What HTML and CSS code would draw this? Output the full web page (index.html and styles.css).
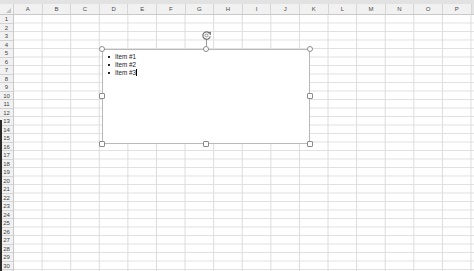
FILE: index.html
```html
<!DOCTYPE html>
<html>
<head>
<meta charset="utf-8">
<link rel="stylesheet" href="styles.css">
</head>
<body>
<div class="app">
  <div class="topbar"></div>
  <div class="colhead">
    <div class="corner"><span class="tri"></span></div>
    <div class="ch">A</div><div class="ch">B</div><div class="ch">C</div><div class="ch">D</div>
    <div class="ch">E</div><div class="ch">F</div><div class="ch">G</div><div class="ch">H</div>
    <div class="ch">I</div><div class="ch">J</div><div class="ch">K</div><div class="ch">L</div>
    <div class="ch">M</div><div class="ch">N</div><div class="ch">O</div><div class="ch">P</div>
    <div class="chrest"></div>
  </div>
  <div class="main">
    <div class="rowhead">
      <div class="rh">1</div><div class="rh">2</div><div class="rh">3</div><div class="rh">4</div><div class="rh">5</div>
      <div class="rh">6</div><div class="rh">7</div><div class="rh">8</div><div class="rh">9</div><div class="rh">10</div>
      <div class="rh">11</div><div class="rh">12</div><div class="rh">13</div><div class="rh">14</div><div class="rh">15</div>
      <div class="rh">16</div><div class="rh">17</div><div class="rh">18</div><div class="rh">19</div><div class="rh">20</div>
      <div class="rh">21</div><div class="rh">22</div><div class="rh">23</div><div class="rh">24</div><div class="rh">25</div>
      <div class="rh">26</div><div class="rh">27</div><div class="rh">28</div><div class="rh">29</div><div class="rh">30</div>
    </div>
    <div class="cells"></div>
  </div>

  <div class="edge"></div>

  <div class="textbox">
    <ul class="items">
      <li>Item #1</li>
      <li>Item #2</li>
      <li>Item #3<span class="caret"></span></li>
    </ul>
    <span class="h h-tl"></span><span class="h h-tm"></span><span class="h h-tr"></span>
    <span class="h h-ml"></span><span class="h h-mr"></span>
    <span class="h h-bl"></span><span class="h h-bm"></span><span class="h h-br"></span>
    <span class="stem"></span>
    <svg class="rot" width="11" height="11" viewBox="0 0 10 10">
      <path d="M7.8 3.0 A3.4 3.4 0 1 0 8.4 5.8" fill="none" stroke="#6f6f6f" stroke-width="1.1"/>
      <path d="M6.2 2.5 L8.5 2.2 L8.4 4.6" fill="none" stroke="#6f6f6f" stroke-width="1"/>
      <circle cx="5" cy="5" r="1.4" fill="none" stroke="#8a8a8a" stroke-width="0.8"/>
    </svg>
  </div>
</div>
</body>
</html>
```
FILE: styles.css
```css
* { box-sizing: border-box; }
html, body { margin: 0; padding: 0; }
body {
  width: 474px;
  height: 271px;
  overflow: hidden;
  background: #ffffff;
  font-family: "Liberation Sans", Arial, sans-serif;
  -webkit-font-smoothing: antialiased;
}
.app {
  position: relative;
  display: flex;
  flex-direction: column;
  width: 474px;
  height: 271px;
}
.topbar {
  height: 4px;
  background: #e2e2e2;
  flex: none;
}
.colhead {
  display: flex;
  height: 11px;
  flex: none;
  background: #f1f1f1;
  border-bottom: 1px solid #c9c9c9;
}
.corner {
  width: 14px;
  flex: none;
  border-right: 1px solid #cfcfcf;
  position: relative;
}
.tri {
  position: absolute;
  right: 2px;
  bottom: 1px;
  width: 0;
  height: 0;
  border-left: 5px solid transparent;
  border-bottom: 5px solid #c4c4c4;
}
.ch {
  width: 28.6px;
  flex: none;
  border-right: 1px solid #d6d6d6;
  font-size: 6px;
  line-height: 10px;
  color: #4a4a4a;
  text-align: center;
}
.chrest { flex: 1; background: #e4e4e4; }
.main {
  display: flex;
  flex: 1;
}
.rowhead {
  width: 14px;
  flex: none;
  background: #f1f1f1;
  border-right: 1px solid #c9c9c9;
  display: flex;
  flex-direction: column;
}
.rh {
  height: 8.5px;
  flex: none;
  border-bottom: 1px solid #d3d3d3;
  font-size: 6px;
  line-height: 8px;
  color: #444;
  text-align: center;
}
.cells {
  flex: 1;
  background-color: #fff;
  background-image:
    linear-gradient(to right, #dcdcdc 1px, transparent 1px),
    linear-gradient(to bottom, #e0e0e0 1px, transparent 1px);
  background-size: 28.6px 8.5px, 28.6px 8.5px;
  background-position: 27.6px 7.5px, 27.6px 7.5px;
}
.edge {
  position: absolute;
  left: 0;
  top: 120px;
  bottom: 0;
  width: 2px;
  background: #2a2a2a;
}
.textbox {
  position: absolute;
  left: 102px;
  top: 49px;
  width: 208px;
  height: 95px;
  border: 1px solid #b9b9b9;
  background: #fff;
}
.items {
  margin: 0;
  padding: 3px 0 0 12px;
  list-style: none;
  font-size: 6.3px;
  line-height: 8px;
  color: #222;
}
.items li { position: relative; }
.items li::before {
  content: "";
  position: absolute;
  left: -7px;
  top: 3px;
  width: 2px;
  height: 2px;
  background: #222;
}
.caret {
  display: inline-block;
  width: 1px;
  height: 7px;
  background: #000;
  vertical-align: -1px;
}
.h {
  position: absolute;
  width: 6px;
  height: 6px;
  border: 1px solid #8c8c8c;
  border-radius: 50%;
  background: #fff;
}
.h-tl { left: -4px; top: -4px; }
.h-tm { left: 100px; top: -4px; }
.h-tr { right: -4px; top: -4px; }
.h-ml { left: -4px; top: 43px; border-radius: 1px; }
.h-mr { right: -4px; top: 43px; border-radius: 1px; }
.h-bl { left: -4px; bottom: -4px; border-radius: 1px; }
.h-bm { left: 100px; bottom: -4px; border-radius: 1px; }
.h-br { right: -4px; bottom: -4px; border-radius: 1px; }
.stem {
  position: absolute;
  left: 103px;
  top: -10px;
  width: 1px;
  height: 6px;
  background: #9a9a9a;
}
.rot {
  position: absolute;
  left: 98px;
  top: -20px;
}
```
